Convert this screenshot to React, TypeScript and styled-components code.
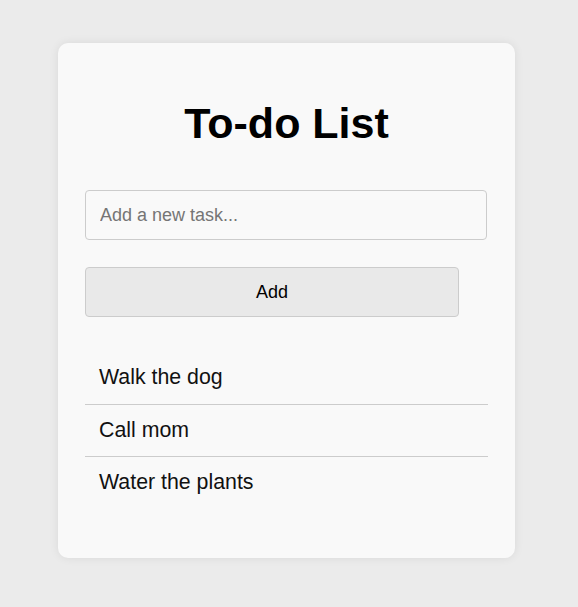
import React, {useState} from 'react';
import styled, {createGlobalStyle} from "styled-components";

const GlobalStyle = createGlobalStyle`
  html, body {
    margin: 0;
    padding: 0;
    background-color: #ebebeb;
    font-family: "Liberation Sans", Arial, sans-serif;
  }
`

export default function App() {
    const [tasks, setTasks] = useState<string[]>(["Walk the dog", "Call mom", "Water the plants"])
    const [value, setValue] = useState("")

    const addTask = () => {
        if (!value.trim()) return
        setTasks([...tasks, value.trim()])
        setValue("")
    }

    return (
        <PageStyled>
            <GlobalStyle/>
            <CardStyled>
                <TitleStyled>To-do List</TitleStyled>
                <InputStyled
                    value={value}
                    onChange={e => setValue(e.target.value)}
                    placeholder="Add a new task..."
                />
                <ButtonStyled onClick={addTask}>Add</ButtonStyled>
                <ListStyled>
                    {tasks.map((t, i) => <ItemStyled key={i}>{t}</ItemStyled>)}
                </ListStyled>
            </CardStyled>
        </PageStyled>
    );
}

const PageStyled = styled.div`
  min-height: 607px;
  padding: 43px 0 0 58px;
  box-sizing: border-box;
`

const CardStyled = styled.div`
  width: 457px;
  height: 515px;
  box-sizing: border-box;
  padding: 56px 27px 0 27px;
  background-color: #f9f9f9;
  border-radius: 10px;
  box-shadow: 0 0 10px rgba(0, 0, 0, 0.08);
  display: flex;
  flex-direction: column;
`

const TitleStyled = styled.h1`
  margin: 0 0 43px 0;
  font-size: 43px;
  line-height: 48px;
  font-weight: bold;
  text-align: center;
  color: #000;
`

const InputStyled = styled.input`
  width: 402px;
  height: 50px;
  box-sizing: border-box;
  padding: 0 14px;
  border: 1px solid #ccc;
  border-radius: 4px;
  background: #f9f9f9;
  font-family: "Liberation Sans", Arial, sans-serif;
  font-size: 18px;
  color: #111;
  outline: none;

  ::placeholder {
    color: #757575;
  }
`

const ButtonStyled = styled.button`
  margin-top: 27px;
  width: 374px;
  height: 50px;
  box-sizing: border-box;
  border: 1px solid #ccc;
  border-radius: 4px;
  background-color: #e9e9e9;
  font-family: "Liberation Sans", Arial, sans-serif;
  font-size: 18px;
  color: #000;
  cursor: pointer;
`

const ListStyled = styled.ul`
  list-style: none;
  margin: 35px 0 0 0;
  padding: 0;
  width: 403px;
`

const ItemStyled = styled.li`
  padding: 13px 14px 14px 14px;
  font-size: 21.33px;
  line-height: 24px;
  color: #111;
  border-bottom: 1px solid #ccc;

  &:first-child {
    padding-bottom: 15px;
  }

  &:last-child {
    border-bottom: none;
  }
`
